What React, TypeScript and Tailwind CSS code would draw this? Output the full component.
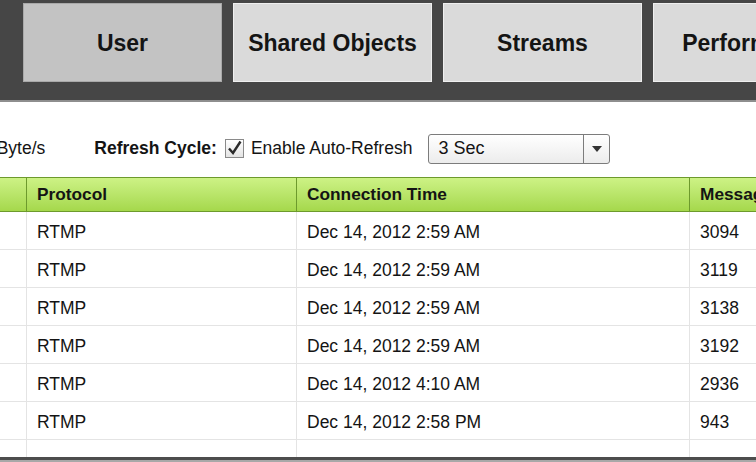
import React from "react";

const tabs = [
  { label: "User", active: true },
  { label: "Shared Objects", active: false },
  { label: "Streams", active: false },
  { label: "Performance", active: false },
];

const rows = [
  { protocol: "RTMP", time: "Dec 14, 2012 2:59 AM", messages: "3094" },
  { protocol: "RTMP", time: "Dec 14, 2012 2:59 AM", messages: "3119" },
  { protocol: "RTMP", time: "Dec 14, 2012 2:59 AM", messages: "3138" },
  { protocol: "RTMP", time: "Dec 14, 2012 2:59 AM", messages: "3192" },
  { protocol: "RTMP", time: "Dec 14, 2012 4:10 AM", messages: "2936" },
  { protocol: "RTMP", time: "Dec 14, 2012 2:58 PM", messages: "943" },
  { protocol: "", time: "", messages: "" },
];

export default function App() {
  return (
    <div
      className="w-[756px] h-[462px] overflow-hidden bg-white text-[#141414] flex flex-col"
      style={{ fontFamily: '"Liberation Sans", Arial, sans-serif' }}
    >
      {/* Tab bar */}
      <div className="h-[102px] shrink-0 bg-[#464646] border-b-2 border-[#8e8e8e] flex items-start gap-[11px] pl-[23px] pt-[3px]">
        {tabs.map((tab) => (
          <div
            key={tab.label}
            className={`w-[199px] h-[79px] shrink-0 flex items-center justify-center pt-[1px] text-[23px] font-bold whitespace-nowrap ${
              tab.active
                ? "bg-[#c3c3c3] border border-[#a9a9a9]"
                : "bg-[#dadada] border border-[#efefef]"
            }`}
          >
            {tab.label}
          </div>
        ))}
      </div>

      {/* Toolbar */}
      <div className="h-[75px] shrink-0 flex items-center pt-[18px] text-[17.5px] whitespace-nowrap">
        <span className="ml-[-15px]">KByte/s</span>
        <span className="ml-[49px] font-bold">Refresh Cycle:</span>
        <span className="ml-[8px] w-[19px] h-[19px] border border-[#8a8a8a] bg-gradient-to-b from-white to-[#e4e4e4] flex items-center justify-center">
          <svg width="17" height="17" viewBox="0 0 17 17">
            <path
              d="M3 8.5 L7 13 L14.5 1.5"
              fill="none"
              stroke="#2a2a2a"
              strokeWidth="2.4"
              strokeLinejoin="miter"
            />
          </svg>
        </span>
        <span className="ml-[7px]">Enable Auto-Refresh</span>
        <div className="ml-[16px] w-[182px] h-[30px] border border-[#7c7c7c] rounded-[3px] bg-gradient-to-b from-white to-[#ececec] flex items-stretch">
          <span className="flex-1 pl-[9px] flex items-center text-[18px]">
            3 Sec
          </span>
          <span className="w-[26px] border-l border-[#7c7c7c] flex items-center justify-center">
            <svg width="10" height="6" viewBox="0 0 10 6">
              <path d="M0 0 H10 L5 6 Z" fill="#333" />
            </svg>
          </span>
        </div>
      </div>

      {/* Table */}
      <div className="h-[283px] shrink-0 overflow-hidden border-b-[3px] border-[#4d4d4d] ml-[-73px]">
        <div className="w-[900px] h-[35px] flex border-y border-[#6d9a2c] bg-gradient-to-b from-[#cdf285] to-[#a5d84b] text-[17.3px] font-bold">
          <div className="w-[100px] border-r border-[#6d9a2c]" />
          <div className="w-[270px] border-r border-[#6d9a2c] pl-[10px] flex items-center">
            Protocol
          </div>
          <div className="w-[393px] border-r border-[#6d9a2c] pl-[10px] flex items-center">
            Connection Time
          </div>
          <div className="flex-1 pl-[10px] flex items-center">Messages</div>
        </div>
        {rows.map((row, i) => (
          <div
            key={i}
            className="w-[900px] h-[38px] flex border-b border-[#e4e4e4] text-[17.5px]"
          >
            <div className="w-[100px] border-r border-[#e4e4e4]" />
            <div className="w-[270px] border-r border-[#e4e4e4] pl-[10px] pt-[3px] flex items-center">
              {row.protocol}
            </div>
            <div className="w-[393px] border-r border-[#e4e4e4] pl-[10px] pt-[3px] flex items-center">
              {row.time}
            </div>
            <div className="flex-1 pl-[10px] pt-[3px] flex items-center">
              {row.messages}
            </div>
          </div>
        ))}
      </div>
      <div className="flex-1 bg-[#a8a8a8]" />
    </div>
  );
}
